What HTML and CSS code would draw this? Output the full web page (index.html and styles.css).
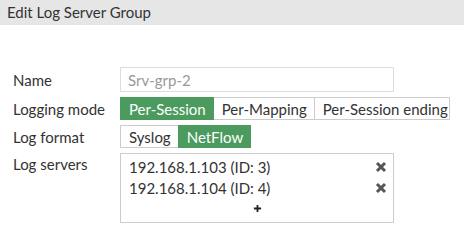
FILE: index.html
```html
<!DOCTYPE html>
<html lang="en">

<head>
  <meta charset="UTF-8">
  <title>Edit Log Server Group</title>
  <link rel="stylesheet" href="styles.css">
</head>

<body>
  <!-- title bar -->
  <header class="title-bar">Edit Log Server Group</header>

  <!-- form -->
  <div class="form">
    <label class="field-label">Name</label>
    <div><input class="text-input" type="text" value="Srv-grp-2"></div>

    <label class="field-label">Logging mode</label>
    <div class="btn-group">
      <button class="btn-toggle active">Per-Session</button>
      <button class="btn-toggle">Per-Mapping</button>
      <button class="btn-toggle btn-tight">Per-Session ending</button>
    </div>

    <label class="field-label">Log format</label>
    <div class="btn-group">
      <button class="btn-toggle">Syslog</button>
      <button class="btn-toggle active">NetFlow</button>
    </div>

    <label class="field-label top">Log servers</label>
    <div class="server-list">
      <div class="server-item">
        <span>192.168.1.103 (ID: 3)</span>
        <svg class="icon-remove" viewBox="0 0 12 12"><path d="M2 2 L10 10 M10 2 L2 10"/></svg>
      </div>
      <div class="server-item">
        <span>192.168.1.104 (ID: 4)</span>
        <svg class="icon-remove" viewBox="0 0 12 12"><path d="M2 2 L10 10 M10 2 L2 10"/></svg>
      </div>
      <div class="server-add">
        <svg class="icon-add" viewBox="0 0 10 10"><path d="M5 1 V9 M1 5 H9"/></svg>
      </div>
    </div>
  </div>
</body>

</html>
```

FILE: styles.css
```css
/* base */
html,
body {
  margin: 0;
  padding: 0;
  font-family: Lato, "Open Sans", sans-serif;
  font-size: 15px;
  color: #333;
  background-color: white;
}

/* title bar */
.title-bar {
  height: 25px;
  line-height: 24px;
  padding-left: 7px;
  font-size: 15px;
  color: #333;
  background-color: #e6e6e6;
}

/* form grid */
.form {
  display: grid;
  grid-template-columns: 107px auto;
  align-items: center;
  row-gap: 5px;
  padding: 42px 0 0 13px;
}

.field-label {
  color: #333;
}

.field-label.top {
  align-self: start;
  padding-top: 2px;
}

.text-input {
  box-sizing: border-box;
  width: 274px;
  height: 25px;
  padding: 0 7px;
  border: 1px solid #ddd;
  font-family: inherit;
  font-size: 15px;
  color: #999;
  outline: none;
}

/* toggle buttons */
.btn-group {
  display: flex;
}

.btn-toggle {
  height: 23px;
  padding: 0 7px 0 8px;
  font-family: inherit;
  font-size: 15px;
  color: #333;
  background-color: white;
  border: 1px solid #ccc;
  margin-left: -1px;
  cursor: pointer;
}

.btn-toggle:first-child {
  margin-left: 0;
}

/* the last mode button is squeezed against the right edge */
.btn-tight {
  padding-right: 1px;
}

.btn-toggle.active {
  color: white;
  background-color: #4b9a5e;
  border-color: #4b9a5e;
  position: relative;
}

/* log servers */
.server-list {
  box-sizing: border-box;
  width: 274px;
  border: 1px solid #ccc;
  padding: 2px 0 3px;
}

.server-item {
  display: flex;
  justify-content: space-between;
  align-items: center;
  height: 21px;
  padding: 0 6px 0 8px;
}

.icon-remove {
  width: 12px;
  height: 12px;
  fill: none;
  stroke: #555;
  stroke-width: 3;
}

.server-add {
  display: flex;
  justify-content: center;
  height: 21px;
  align-items: center;
}

.icon-add {
  width: 9px;
  height: 9px;
  fill: none;
  stroke: #222;
  stroke-width: 2;
}
```
